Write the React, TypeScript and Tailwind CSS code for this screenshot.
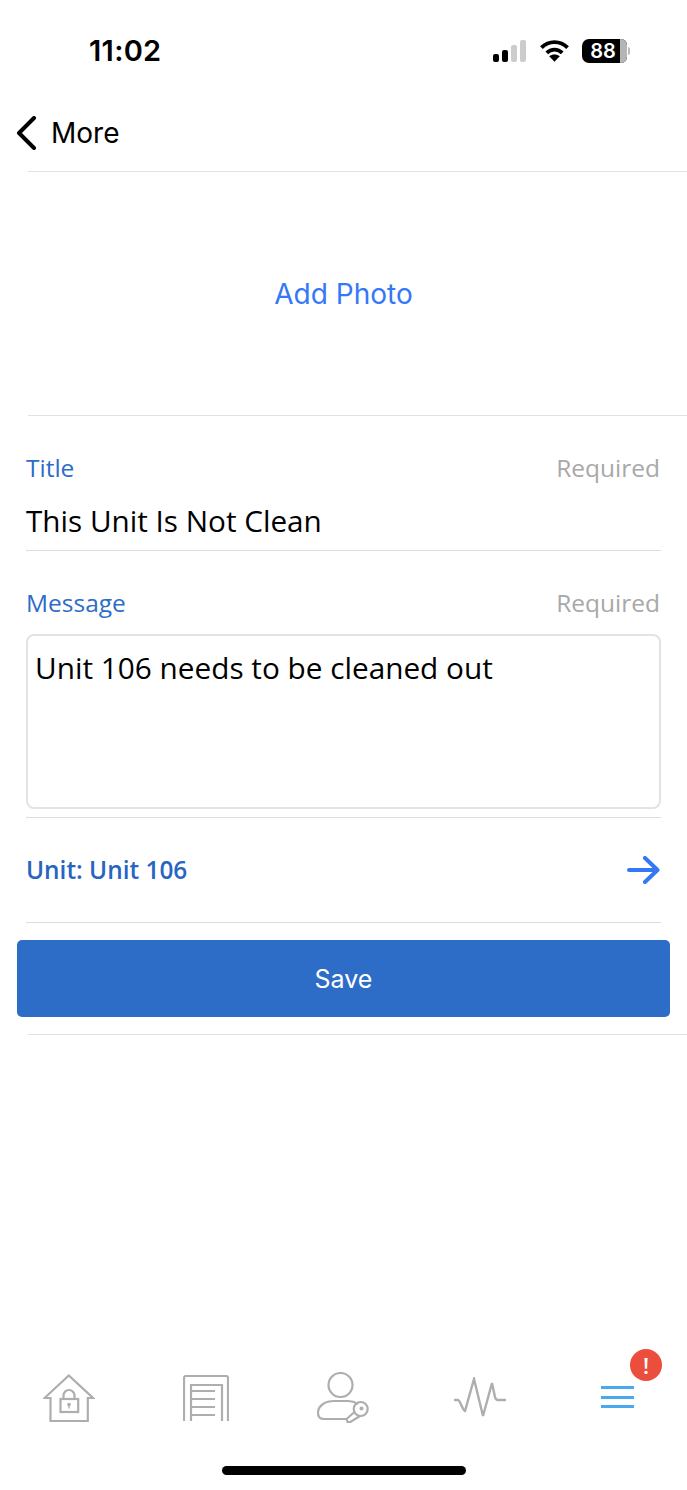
const inter = "font-['Inter','Liberation_Sans',sans-serif]";

function StatusIcons() {
  return (
    <div className="flex items-center">
      <svg width="34" height="22" viewBox="0 0 34 22" className="mr-[13px]">
        <rect x="0" y="14" width="6" height="8" rx="2" fill="#000" />
        <rect x="9" y="10" width="6" height="12" rx="2" fill="#000" />
        <rect x="18" y="5" width="6" height="17" rx="2" fill="#ccc" />
        <rect x="27" y="0" width="6" height="22" rx="2" fill="#ccc" />
      </svg>
      <svg width="29" height="22" viewBox="0 0 30 22" className="mr-[13px]">
        <path d="M1.5 7.5C9 0 21 0 28.5 7.5" fill="none" stroke="#000" strokeWidth="4" />
        <path d="M7 13C11.5 8.5 18.5 8.5 23 13" fill="none" stroke="#000" strokeWidth="4" />
        <path d="M15 22L9.5 16.5C12.5 14 17.5 14 20.5 16.5Z" fill="#000" />
      </svg>
      <div className="relative h-[24px] w-[45px] overflow-hidden rounded-l-[7px] rounded-r-[6px] bg-black">
        <div className="flex h-full w-[44px] items-center justify-center pr-[2px] font-['Inter',sans-serif] text-[20px] leading-none font-semibold text-white">
          88
        </div>
        <div className="absolute top-0 right-0 h-full w-[7px] bg-[#b5b5b5]" />
      </div>
      <div className="ml-[1px] h-[8px] w-[2px] rounded-r-full bg-[#bbb]" />
    </div>
  );
}

function HomeLock() {
  return (
    <svg width="52" height="48" viewBox="0 0 52 48" fill="none" stroke="#aeaeae" strokeWidth="2.2">
      <path d="M7.5 47V24H1.5L25.8 1.5L50 24H44.8V47Z" />
      <rect x="17.5" y="25" width="17.7" height="13" />
      <path d="M20.5 25V21.5a5.5 5.5 0 0 1 11 0V25" />
      <circle cx="26" cy="30.5" r="1.8" fill="#aeaeae" stroke="none" />
      <path d="M26 31v3.5" strokeWidth="1.4" />
    </svg>
  );
}

function UnitDoor() {
  return (
    <svg width="46" height="46" viewBox="0 0 46 46" fill="none" stroke="#aeaeae" strokeWidth="2.2">
      <path d="M1 46V3a2 2 0 0 1 2-2h40a2 2 0 0 1 2 2v43" />
      <path d="M8 46V10h31v36" />
      <path d="M8 16h24M8 24h24M8 32h24M8 40h24" />
    </svg>
  );
}

function PersonKey() {
  return (
    <svg width="54" height="52" viewBox="0 0 54 52" fill="none" stroke="#aeaeae" strokeWidth="2.2">
      <circle cx="24.5" cy="13" r="12" />
      <path d="M30 47H8C3 47 2 44 2 41c0-8 8-12 16-12h14c3 0 7 1 10 3" />
      <circle cx="44.7" cy="37" r="7" />
      <circle cx="45.5" cy="36.5" r="2" fill="#aeaeae" stroke="none" />
      <path d="M38.5 40L30.5 47l1 3h3L44 44" />
    </svg>
  );
}

function Pulse() {
  return (
    <svg width="54" height="42" viewBox="0 0 54 42" fill="none" stroke="#aeaeae" strokeWidth="2.4">
      <path d="M1 23h4c2 0 5 11 7 11L21 2l9 37 9-33 3 14c.5 2 1 3 3 3h8" />
    </svg>
  );
}

export default function App() {
  return (
    <div className="flex h-[1490px] w-[687px] flex-col overflow-hidden bg-white font-['Open_Sans',sans-serif] text-black">
      <div className="flex h-[100px] items-start justify-between pt-[35px] pr-[57px] pl-[89px]">
        <span className={`${inter} text-[29px] leading-[32px] font-semibold tracking-[0.3px]`}>11:02</span>
        <div className="pt-[4px]">
          <StatusIcons />
        </div>
      </div>

      <div className="flex h-[71px] items-center pb-[6px] pl-[16px]">
        <svg width="22" height="34" viewBox="0 0 22 34" fill="none" stroke="#000" strokeWidth="4" strokeLinecap="round" strokeLinejoin="round">
          <path d="M18 2L3 17l15 15" />
        </svg>
        <span className={`${inter} ml-[13px] text-[28px] leading-none`}>More</span>
      </div>

      <div className="ml-[28px] flex h-[245px] items-center justify-center border-y border-[#e2e2e2] pr-[28px]">
        <span className={`${inter} text-[28px] leading-none text-[#3478f6]`}>Add Photo</span>
      </div>

      <div className="mr-[26px] ml-[26px] flex flex-col">
        <div className="flex items-center justify-between pt-[36px]">
          <span className="text-[24.5px] leading-[32px] text-[#2d6cc8]">Title</span>
          <span className="pr-[1px] text-[24.5px] leading-[32px] text-[#a8a8a8]">Required</span>
        </div>
        <div className="flex h-[67px] items-center border-b border-[#dcdcdc] pt-[7px] text-[29.7px] leading-none">
          This Unit Is Not Clean
        </div>

        <div className="flex items-center justify-between pt-[36px]">
          <span className="text-[24.5px] leading-[32px] text-[#2d6cc8]">Message</span>
          <span className="pr-[1px] text-[24.5px] leading-[32px] text-[#a8a8a8]">Required</span>
        </div>
        <div className="mt-[15px] h-[175px] rounded-[8px] border-2 border-[#e3e3e3] px-[7px] pt-[14px] text-[29.75px] leading-[36px]">
          Unit 106 needs to be cleaned out
        </div>

        <div className="mt-[8px] flex h-[106px] items-center justify-between border-y border-[#dcdcdc]">
          <span className="text-[24.4px] leading-none font-semibold text-[#2864c2]">Unit: Unit 106</span>
          <svg width="33" height="28" viewBox="0 0 33 28" fill="none" stroke="#3478f6" strokeWidth="4" strokeLinecap="round" strokeLinejoin="round" className="mr-[1px]">
            <path d="M2 14h28M18 2l12.5 12L18 26" />
          </svg>
        </div>
      </div>

      <button className={`${inter} mt-[17px] mr-[17px] ml-[17px] h-[77px] rounded-[5px] bg-[#2d6dc8] pt-[2px] text-[25px] leading-none text-white`}>
        Save
      </button>

      <div className="mt-[17px] ml-[28px] border-t border-[#e2e2e2]" />

      <div className="relative mt-[324px] flex h-[60px] items-start">
        <div className="flex w-[137px] justify-center pt-[15px]"><HomeLock /></div>
        <div className="flex w-[137px] justify-center pt-[16px]"><UnitDoor /></div>
        <div className="flex w-[137px] justify-center pt-[13px]"><PersonKey /></div>
        <div className="flex w-[137px] justify-center pt-[18px]"><Pulse /></div>
        <div className="relative flex w-[139px] justify-center pt-[27px]">
          <div className="flex w-[33px] flex-col gap-[6.5px]">
            <div className="h-[3px] bg-[#4aa8ec]" />
            <div className="h-[3px] bg-[#4aa8ec]" />
            <div className="h-[3px] bg-[#4aa8ec]" />
          </div>
          <div className="absolute top-[-10px] left-[82px] flex h-[32px] w-[32px] items-center justify-center rounded-full bg-[#ec4e3e] text-[22px] leading-none font-semibold text-white">
            !
          </div>
        </div>
      </div>

      <div className="mt-[47px] ml-[222px] h-[9px] w-[244px] rounded-full bg-black" />
    </div>
  );
}
